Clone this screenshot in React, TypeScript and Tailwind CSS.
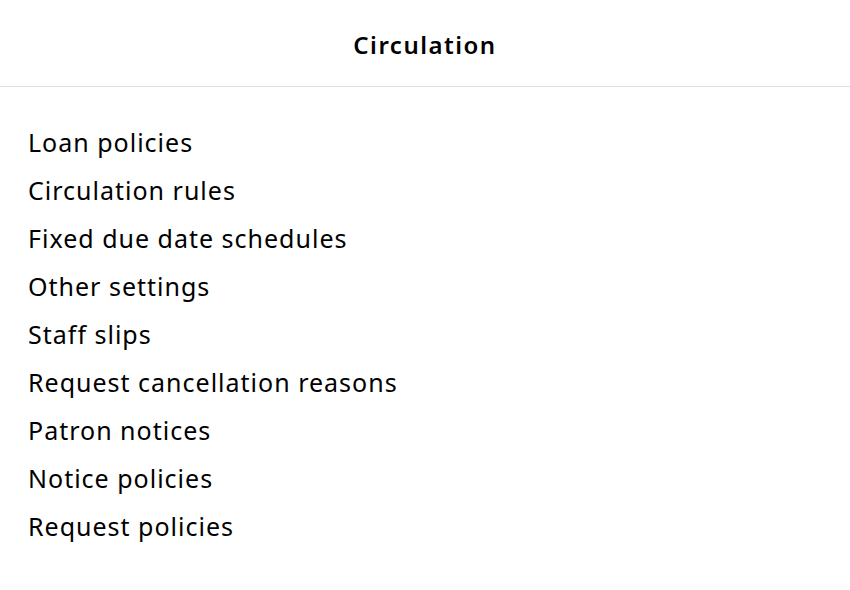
const items = [
  "Loan policies",
  "Circulation rules",
  "Fixed due date schedules",
  "Other settings",
  "Staff slips",
  "Request cancellation reasons",
  "Patron notices",
  "Notice policies",
  "Request policies",
];

export default function App() {
  return (
    <div
      className="w-[850px] h-[590px] bg-white text-[#000] overflow-hidden"
      style={{ fontFamily: '"Noto Sans", "Open Sans", sans-serif' }}
    >
      {/* Pane header */}
      <div className="h-[87px] flex items-center justify-center border-b border-[#e0e0e0]">
        <h1 className="text-[24px] font-semibold tracking-[1.5px] mt-[3px]">Circulation</h1>
      </div>

      {/* Nav list */}
      <ul className="pt-[32px] px-[28px] flex flex-col">
        {items.map((label) => (
          <li key={label} className="h-[48px] flex items-center text-[25px] tracking-[1px]">
            {label}
          </li>
        ))}
      </ul>
    </div>
  );
}
